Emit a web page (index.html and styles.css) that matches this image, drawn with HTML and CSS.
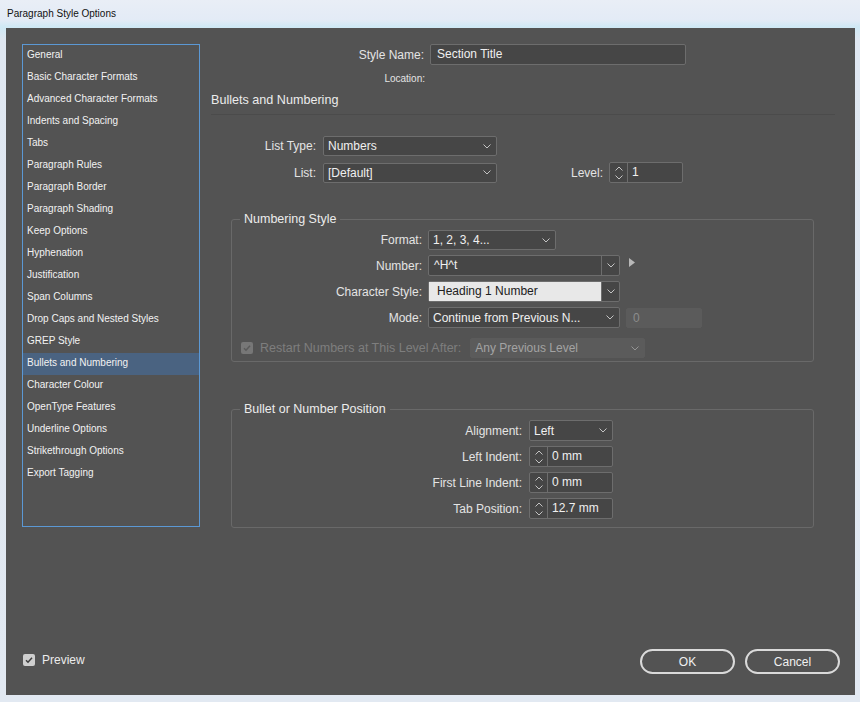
FILE: index.html
```html
<!DOCTYPE html>
<html>
<head>
<meta charset="UTF-8">
<title>Paragraph Style Options</title>
<link rel="stylesheet" href="styles.css">
</head>
<body>
<div class="window">
  <div class="titlebar">Paragraph Style Options</div>
  <div class="client">
    <div class="main">
      <ul class="sections">
        <li>General</li>
        <li>Basic Character Formats</li>
        <li>Advanced Character Formats</li>
        <li>Indents and Spacing</li>
        <li>Tabs</li>
        <li>Paragraph Rules</li>
        <li>Paragraph Border</li>
        <li>Paragraph Shading</li>
        <li>Keep Options</li>
        <li>Hyphenation</li>
        <li>Justification</li>
        <li>Span Columns</li>
        <li>Drop Caps and Nested Styles</li>
        <li>GREP Style</li>
        <li class="active">Bullets and Numbering</li>
        <li>Character Colour</li>
        <li>OpenType Features</li>
        <li>Underline Options</li>
        <li>Strikethrough Options</li>
        <li>Export Tagging</li>
      </ul>

      <div class="panel">
        <div class="name-row">
          <span class="name-label">Style Name:</span>
          <div class="textbox name-box">Section Title</div>
        </div>
        <div class="loc-row"><span class="loc-label">Location:</span></div>
        <h2 class="pane-title">Bullets and Numbering</h2>

        <div class="list-block">
          <div class="row">
            <span class="lbl list-lbl">List Type:</span>
            <div class="select list-sel"><span>Numbers</span><svg class="chev" viewBox="0 0 8 5"><polyline points="0.5,0.5 4,4 7.5,0.5"/></svg></div>
          </div>
          <div class="row">
            <span class="lbl list-lbl">List:</span>
            <div class="select list-sel"><span>[Default]</span><svg class="chev" viewBox="0 0 8 5"><polyline points="0.5,0.5 4,4 7.5,0.5"/></svg></div>
            <span class="lbl level-lbl">Level:</span>
            <div class="spinner level-spin">
              <span class="arrows"><svg viewBox="0 0 8 14"><polyline points="0.5,4.5 4,1 7.5,4.5"/><polyline points="0.5,9.5 4,13 7.5,9.5"/></svg></span>
              <span class="val">1</span>
            </div>
          </div>
        </div>

        <fieldset class="group numbering">
          <legend>Numbering Style</legend>
          <div class="form">
            <span class="lbl">Format:</span>
            <div class="select fmt-sel"><span>1, 2, 3, 4...</span><svg class="chev" viewBox="0 0 8 5"><polyline points="0.5,0.5 4,4 7.5,0.5"/></svg></div>

            <span class="lbl">Number:</span>
            <div class="field-line">
              <div class="combo">
                <span class="combo-text">^H^t</span>
                <span class="combo-btn"><svg class="chev" viewBox="0 0 8 5"><polyline points="0.5,0.5 4,4 7.5,0.5"/></svg></span>
              </div>
              <svg class="flyout" viewBox="0 0 6 9"><polygon points="0,0 6,4.5 0,9"/></svg>
            </div>

            <span class="lbl">Character Style:</span>
            <div class="combo">
              <span class="combo-text light">Heading 1 Number</span>
              <span class="combo-btn"><svg class="chev" viewBox="0 0 8 5"><polyline points="0.5,0.5 4,4 7.5,0.5"/></svg></span>
            </div>

            <span class="lbl">Mode:</span>
            <div class="field-line">
              <div class="select mode-sel"><span>Continue from Previous N...</span><svg class="chev" viewBox="0 0 8 5"><polyline points="0.5,0.5 4,4 7.5,0.5"/></svg></div>
              <div class="textbox disabled-box">0</div>
            </div>
          </div>
          <div class="restart-row">
            <span class="check off"><svg viewBox="0 0 12 12"><polyline points="3,6.2 5,8.2 9,3.8"/></svg></span>
            <span class="restart-lbl">Restart Numbers at This Level After:</span>
            <div class="select dis-sel"><span>Any Previous Level</span><svg class="chev" viewBox="0 0 8 5"><polyline points="0.5,0.5 4,4 7.5,0.5"/></svg></div>
          </div>
        </fieldset>

        <fieldset class="group position">
          <legend>Bullet or Number Position</legend>
          <div class="form wide">
            <span class="lbl">Alignment:</span>
            <div class="select pos-sel"><span>Left</span><svg class="chev" viewBox="0 0 8 5"><polyline points="0.5,0.5 4,4 7.5,0.5"/></svg></div>

            <span class="lbl">Left Indent:</span>
            <div class="spinner pos-spin">
              <span class="arrows"><svg viewBox="0 0 8 14"><polyline points="0.5,4.5 4,1 7.5,4.5"/><polyline points="0.5,9.5 4,13 7.5,9.5"/></svg></span>
              <span class="val">0 mm</span>
            </div>

            <span class="lbl">First Line Indent:</span>
            <div class="spinner pos-spin">
              <span class="arrows"><svg viewBox="0 0 8 14"><polyline points="0.5,4.5 4,1 7.5,4.5"/><polyline points="0.5,9.5 4,13 7.5,9.5"/></svg></span>
              <span class="val">0 mm</span>
            </div>

            <span class="lbl">Tab Position:</span>
            <div class="spinner pos-spin">
              <span class="arrows"><svg viewBox="0 0 8 14"><polyline points="0.5,4.5 4,1 7.5,4.5"/><polyline points="0.5,9.5 4,13 7.5,9.5"/></svg></span>
              <span class="val">12.7 mm</span>
            </div>
          </div>
        </fieldset>
      </div>
    </div>

    <div class="footer">
      <label class="preview">
        <span class="check"><svg viewBox="0 0 12 12"><polyline points="3,6.2 5,8.2 9,3.8"/></svg></span>
        Preview
      </label>
      <div class="buttons">
        <button class="btn">OK</button>
        <button class="btn">Cancel</button>
      </div>
    </div>
  </div>
</div>
</body>
</html>
```

FILE: styles.css
```css
html, body {
  margin: 0;
  padding: 0;
}
body {
  font-family: "Liberation Sans", Arial, sans-serif;
  font-size: 12px;
  color: #e4e4e4;
}

.window {
  width: 860px;
  height: 702px;
  box-sizing: border-box;
  padding: 0 5px 7px 6px;
  display: flex;
  flex-direction: column;
  background: linear-gradient(to bottom, #e9eef6 0px, #e3ebf6 20px, #cfe9f5 27px, #dfe7f1 40px, #e2e9f2 100%);
}
.titlebar {
  height: 28px;
  line-height: 28px;
  padding-left: 1px;
  font-size: 10px;
  color: #111;
}
.client {
  flex: 1;
  display: flex;
  flex-direction: column;
  background: #535353;
}

.main {
  display: flex;
  padding: 16px 20px 0 16px;
}

/* left list of sections */
.sections {
  list-style: none;
  margin: 0;
  padding: 0;
  width: 178px;
  height: 483px;
  box-sizing: border-box;
  border: 1px solid #5b98d4;
  font-size: 10px;
  color: #f2f2f2;
}
.sections li {
  height: 22px;
  line-height: 20px;
  padding-left: 4px;
}
.sections li.active {
  background: #4a6381;
}

.panel {
  flex: 1;
  margin-left: 11px;
}

.name-row {
  display: flex;
  align-items: center;
  height: 21px;
}
.name-label {
  width: 213px;
  text-align: right;
  margin-right: 6px;
  font-size: 12px;
}
.textbox {
  box-sizing: border-box;
  height: 21px;
  line-height: 19px;
  padding: 0 6px;
  border: 1px solid #6d6d6d;
  border-radius: 2px;
  background: #464646;
  color: #f0f0f0;
}
.name-box {
  width: 256px;
}
.loc-row {
  margin-top: 5px;
  height: 16px;
  line-height: 16px;
}
.loc-label {
  display: inline-block;
  width: 214px;
  text-align: right;
  font-size: 10px;
}
.pane-title {
  margin: 5px 0 0 0;
  font-size: 12.6px;
  font-weight: normal;
  line-height: 18px;
  padding-bottom: 5px;
  border-bottom: 1px solid #4b4b4b;
  color: #ececec;
}

.list-block {
  margin-top: 21px;
  display: flex;
  flex-direction: column;
  gap: 6px;
}
.row {
  display: flex;
  align-items: center;
}
.lbl {
  text-align: right;
  white-space: nowrap;
}
.list-lbl {
  width: 105px;
  margin-right: 7px;
}
.level-lbl {
  width: 106px;
  margin-right: 6px;
}

.select {
  box-sizing: border-box;
  height: 20px;
  display: flex;
  align-items: center;
  justify-content: space-between;
  padding: 0 5px 0 4px;
  border: 1px solid #6d6d6d;
  border-radius: 2px;
  background: #464646;
  color: #f0f0f0;
  white-space: nowrap;
}
.chev {
  width: 8px;
  height: 5px;
  flex: none;
  fill: none;
  stroke: #c4c4c4;
  stroke-width: 1;
}
.list-sel { width: 174px; }
.fmt-sel { width: 128px; }
.mode-sel { width: 192px; height: 21px; }
.pos-sel { width: 84px; height: 21px; }

.spinner {
  box-sizing: border-box;
  height: 20px;
  display: flex;
  border: 1px solid #6d6d6d;
  border-radius: 2px;
  background: #464646;
  color: #f0f0f0;
}
.spinner .arrows {
  width: 17px;
  flex: none;
  display: flex;
  align-items: center;
  justify-content: center;
  border-right: 1px solid #6d6d6d;
}
.spinner .arrows svg {
  width: 8px;
  height: 14px;
  fill: none;
  stroke: #c4c4c4;
  stroke-width: 1;
}
.spinner .val {
  padding-left: 4px;
  line-height: 18px;
}
.level-spin { width: 74px; height: 21px; }
.pos-spin { width: 84px; height: 21px; }
.pos-spin .val { line-height: 19px; }

/* group boxes */
.group {
  margin: 0 0 0 20px;
  width: 583px;
  box-sizing: border-box;
  border: 1px solid #696969;
  border-radius: 3px;
  padding: 3px 0 3px 0;
}
.group legend {
  margin-left: 8px;
  padding: 0 4px;
  font-size: 12.5px;
  line-height: 16px;
  color: #ececec;
}
.numbering {
  margin-top: 28px;
}
.position {
  margin-top: 39px;
  padding-bottom: 8px;
}

.form {
  display: grid;
  grid-template-columns: 190px auto;
  column-gap: 6px;
  row-gap: 5px;
  align-items: center;
  justify-items: start;
}
.form.wide {
  grid-template-columns: 290px auto;
  column-gap: 7px;
}
.form .lbl {
  justify-self: end;
}
.field-line {
  display: flex;
  align-items: center;
}
.combo {
  box-sizing: border-box;
  width: 192px;
  height: 21px;
  display: flex;
  border: 1px solid #6d6d6d;
  border-radius: 2px;
  background: #464646;
}
.combo-text {
  flex: 1;
  padding-left: 5px;
  line-height: 19px;
  color: #f0f0f0;
}
.combo-text.light {
  background: #e8e8e8;
  color: #202020;
  padding-left: 8px;
}
.combo-btn {
  width: 17px;
  flex: none;
  display: flex;
  align-items: center;
  justify-content: center;
  border-left: 1px solid #6d6d6d;
}
.flyout {
  width: 6px;
  height: 9px;
  margin-left: 9px;
  margin-top: -7px;
  fill: #b8b8b8;
}
.disabled-box {
  margin-left: 6px;
  width: 76px;
  height: 20px;
  background: #5b5b5b;
  border-color: #5b5b5b;
  color: #8c8c8c;
}

.restart-row {
  display: flex;
  align-items: center;
  margin-top: 10px;
  padding-left: 9px;
}
.check {
  box-sizing: border-box;
  width: 12px;
  height: 12px;
  border-radius: 2px;
  background: #cfcfcf;
  display: inline-flex;
}
.check svg {
  width: 12px;
  height: 12px;
  fill: none;
  stroke: #3d3d3d;
  stroke-width: 1.5;
}
.check.off {
  background: #777777;
}
.check.off svg {
  stroke: #5a5a5a;
}
.restart-lbl {
  margin-left: 7px;
  margin-right: 9px;
  font-size: 12.5px;
  color: #7e7e7e;
}
.dis-sel {
  width: 175px;
  background: #5b5b5b;
  border-color: #5b5b5b;
  color: #a3a3a3;
}
.dis-sel .chev {
  stroke: #959595;
}

/* bottom bar */
.footer {
  margin-top: auto;
  display: flex;
  align-items: center;
  justify-content: space-between;
  padding: 0 15px 21px 17px;
}
.preview {
  display: flex;
  align-items: center;
  gap: 7px;
  font-size: 12px;
  color: #ececec;
  margin-top: -4px;
}
.buttons {
  display: flex;
  gap: 10px;
}
.btn {
  width: 95px;
  height: 25px;
  box-sizing: border-box;
  border: 2px solid #dadada;
  border-radius: 13px;
  background: transparent;
  color: #f0f0f0;
  font-family: "Liberation Sans", Arial, sans-serif;
  font-size: 12px;
  padding: 0;
}
```
